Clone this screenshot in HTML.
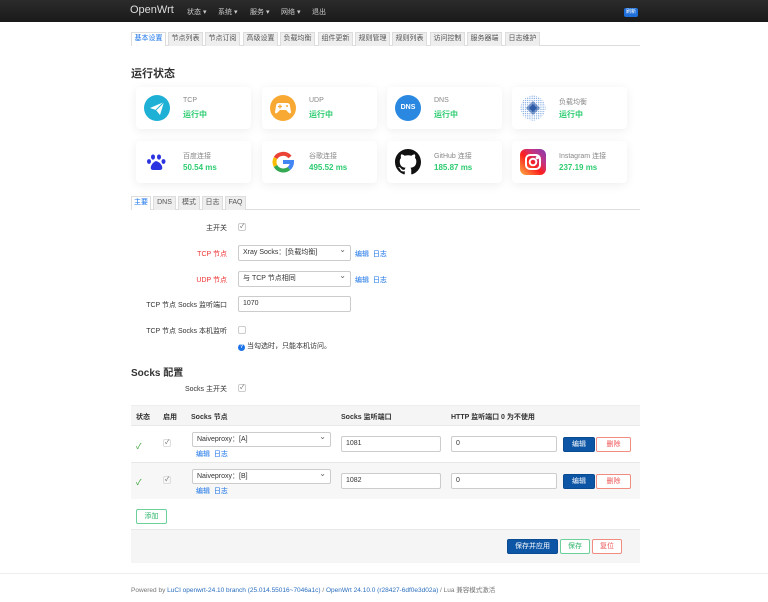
<!DOCTYPE html>
<html><head><meta charset="utf-8"><style>
*{box-sizing:border-box;margin:0;padding:0}
body{width:768px;height:602px;background:#fff;font-family:"Liberation Sans","Noto Sans CJK SC",sans-serif;font-size:7px;color:#333;position:relative;overflow:hidden}
.a{position:absolute;white-space:nowrap}
.hdr{left:0;top:0;width:768px;height:22px;background:linear-gradient(#2b2b2b,#1a1a1a)}
.tab{position:absolute;top:32px;height:14px;border:1px solid #ddd;border-bottom:none;background:#eee;font-size:7px;line-height:12px;text-align:center;color:#555}
.card{position:absolute;width:115px;height:42px;background:#fff;border-radius:4px;box-shadow:0 2px 10px rgba(0,0,0,.07)}
.card .ic{position:absolute;left:8px;top:8px;width:26px;height:26px;border-radius:50%}
.card .l{position:absolute;left:47px;top:10px;color:#888;font-size:7px}
.card .v{position:absolute;left:47px;top:22px;color:#2ecc71;font-weight:bold;font-size:8px}
.lab{position:absolute;right:541px;font-size:7px;color:#333}
.red{color:#e33}
.cb{position:absolute;width:8px;height:8px;border:1px solid #ccc;border-radius:2px;font-size:6px;line-height:6px;text-align:center;color:#555}
.sel,.inp{position:absolute;height:16px;border:1px solid #ccc;border-radius:2px;background:#fff;font-size:7px;line-height:14px;padding-left:4px;color:#333}
.sel:after{content:"⌄";position:absolute;right:4px;top:-3px;color:#666;font-size:8px}
.lk{color:#1a73e8;font-size:7px}
.btn{position:absolute;height:15px;border-radius:2px;font-size:7px;line-height:13px;text-align:center}
.bb{background:#0d56a6;border:1px solid #0a4a90;color:#fff}
.br{border:1px solid #f08c80;color:#e55;background:#fff}
.bg{border:1px solid #6cd09a;color:#2bb56a;background:#fff}
</style></head><body>
<div class="a hdr"></div>
<div class="a" style="left:130px;top:4px;color:#ddd;font-size:11px">OpenWrt</div>
<div class="a" style="left:187px;top:7px;color:#ccc;font-size:7px">状态 ▾</div>
<div class="a" style="left:218px;top:7px;color:#ccc;font-size:7px">系统 ▾</div>
<div class="a" style="left:250px;top:7px;color:#ccc;font-size:7px">服务 ▾</div>
<div class="a" style="left:281px;top:7px;color:#ccc;font-size:7px">网络 ▾</div>
<div class="a" style="left:312px;top:7px;color:#ccc;font-size:7px">退出</div>
<div class="a" style="left:624px;top:8px;width:14px;height:9px;background:#1e6fd9;border-radius:2px;color:#fff;font-size:5px;line-height:9px;text-align:center">刷新</div>

<div class="a" style="left:131px;top:45px;width:509px;height:1px;background:#ddd"></div>
<div class="tab" style="left:131px;width:35px;background:#fff;color:#1a73e8;height:14px">基本设置</div>
<div class="tab" style="left:168px;width:35px">节点列表</div>
<div class="tab" style="left:205px;width:35px">节点订阅</div>
<div class="tab" style="left:243px;width:35px">高级设置</div>
<div class="tab" style="left:280px;width:35px">负载均衡</div>
<div class="tab" style="left:318px;width:35px">组件更新</div>
<div class="tab" style="left:355px;width:35px">规则管理</div>
<div class="tab" style="left:392px;width:35px">规则列表</div>
<div class="tab" style="left:430px;width:35px">访问控制</div>
<div class="tab" style="left:467px;width:35px">服务器端</div>
<div class="tab" style="left:505px;width:35px">日志维护</div>

<div class="a" style="left:131px;top:65px;font-size:11px;font-weight:bold;color:#333">运行状态</div>

<div class="card" style="left:136px;top:87px"><div class="ic" style="background:#1fb0d6"><svg width="26" height="26" viewBox="0 0 26 26"><path d="M6 13 L20 7 L16 20 L12 15 Z" fill="#fff"/><path d="M12 15 L20 7" stroke="#1fb0d6" stroke-width="1"/></svg></div><div class="l">TCP</div><div class="v">运行中</div></div>
<div class="card" style="left:262px;top:87px"><div class="ic" style="background:#f8a933"><svg width="26" height="26" viewBox="0 0 26 26"><path d="M6 11 Q6 8 9 8 L17 8 Q20 8 20 11 L21 17 Q21 19 19 18 L16 15 L10 15 L7 18 Q5 19 5 17 Z" fill="#fff"/><circle cx="17" cy="11" r="1" fill="#f8a933"/><path d="M8 11.5h4M10 9.5v4" stroke="#f8a933" stroke-width="1.2"/></svg></div><div class="l">UDP</div><div class="v">运行中</div></div>
<div class="card" style="left:387px;top:87px"><div class="ic" style="background:#2a88e0;color:#fff;font-size:7px;line-height:26px;text-align:center;font-weight:bold">DNS</div><div class="l">DNS</div><div class="v">运行中</div></div>
<div class="card" style="left:512px;top:87px"><div class="ic"><svg width="26" height="26" viewBox="0 0 26 26"><defs><pattern id="d" width="2.2" height="2.2" patternUnits="userSpaceOnUse"><circle cx="1.1" cy="1.1" r=".55" fill="#4a86d8"/></pattern></defs><circle cx="13" cy="13" r="12.5" fill="url(#d)"/><path d="M13 6 L20 13 L13 20 L6 13Z" fill="#1d4fa0" opacity=".55"/><path d="M13 9 L17 13 L13 17 L9 13Z" fill="#1d4fa0" opacity=".8"/></svg></div><div class="l">负载均衡</div><div class="v">运行中</div></div>

<div class="card" style="left:136px;top:141px"><div class="ic"><svg width="26" height="26" viewBox="0 0 26 26" fill="#2b34e0"><ellipse cx="9" cy="8" rx="2" ry="2.6"/><ellipse cx="15" cy="8" rx="2" ry="2.6"/><ellipse cx="5" cy="12.5" rx="2" ry="2.4"/><ellipse cx="19.5" cy="12.5" rx="2" ry="2.4"/><path d="M12 12 Q9 13 7 17 Q6 21 9 21 L16 21 Q19 21 18 17 Q16 13 12 12Z"/></svg></div><div class="l">百度连接</div><div class="v">50.54 ms</div></div>
<div class="card" style="left:262px;top:141px"><div class="ic"><svg width="26" height="26" viewBox="0 0 26 26" fill="none" stroke-width="4"><path d="M20 8 A9 9 0 0 0 5.5 9" stroke="#ea4335"/><path d="M5.5 9 A9 9 0 0 0 5.5 17" stroke="#fbbc05"/><path d="M5.5 17 A9 9 0 0 0 19 19.5" stroke="#34a853"/><path d="M19 19.5 A9 9 0 0 0 22 13 L13 13" stroke="#4285f4"/></svg></div><div class="l">谷歌连接</div><div class="v">495.52 ms</div></div>
<div class="card" style="left:387px;top:141px"><div class="ic"><svg width="26" height="26" viewBox="0 0 16 16"><path fill="#111" d="M8 0C3.58 0 0 3.58 0 8c0 3.540 2.29 6.53 5.47 7.59.4.07.55-.17.55-.38 0-.19-.01-.82-.01-1.49-2.01.37-2.530-.49-2.69-.94-.09-.23-.48-.94-.82-1.130-.28-.15-.68-.52-.01-.53.63-.01 1.08.58 1.23.82.72 1.21 1.87.87 2.33.66.07-.52.28-.87.51-1.07-1.78-.2-3.64-.89-3.64-3.95 0-.87.31-1.59.82-2.15-.08-.2-.36-1.02.08-2.12 0 0 .67-.21 2.2.82.64-.18 1.32-.27 2-.27.68 0 1.36.09 2 .27 1.53-1.04 2.2-.82 2.2-.82.44 1.1.16 1.92.08 2.12.51.56.82 1.27.82 2.15 0 3.07-1.87 3.75-3.65 3.95.29.25.54.73.54 1.48 0 1.07-.01 1.93-.01 2.2 0 .21.15.46.55.38A8.013 8.013 0 0016 8c0-4.42-3.58-8-8-8z"/></svg></div><div class="l">GitHub 连接</div><div class="v">185.87 ms</div></div>
<div class="card" style="left:512px;top:141px"><div class="ic" style="border-radius:6px;background:linear-gradient(45deg,#fcb045,#fd1d1d 45%,#c13584 70%,#833ab4)"><svg width="26" height="26" viewBox="0 0 26 26" fill="none" stroke="#fff" stroke-width="2"><rect x="6" y="6" width="14" height="14" rx="4"/><circle cx="13" cy="13" r="3.3"/><circle cx="17.3" cy="8.7" r=".6" fill="#fff"/></svg></div><div class="l">Instagram 连接</div><div class="v">237.19 ms</div></div>

<div class="a" style="left:131px;top:209px;width:509px;height:1px;background:#ddd"></div>
<div class="tab" style="top:196px;left:131px;width:20px;height:14px;background:#fff;color:#1a73e8">主要</div>
<div class="tab" style="top:196px;left:153px;width:23px">DNS</div>
<div class="tab" style="top:196px;left:178px;width:22px">模式</div>
<div class="tab" style="top:196px;left:202px;width:21px">日志</div>
<div class="tab" style="top:196px;left:225px;width:21px">FAQ</div>

<div class="lab" style="top:223px">主开关</div><div class="cb" style="left:238px;top:223px">✓</div>
<div class="lab red" style="top:249px">TCP 节点</div>
<div class="sel" style="left:238px;top:245px;width:113px">Xray Socks：[负载均衡]</div>
<div class="a lk" style="left:355px;top:249px">编辑 &nbsp;日志</div>
<div class="lab red" style="top:275px">UDP 节点</div>
<div class="sel" style="left:238px;top:271px;width:113px">与 TCP 节点相同</div>
<div class="a lk" style="left:355px;top:275px">编辑 &nbsp;日志</div>
<div class="lab" style="top:300px">TCP 节点 Socks 监听端口</div>
<div class="inp" style="left:238px;top:296px;width:113px">1070</div>
<div class="lab" style="top:326px">TCP 节点 Socks 本机监听</div><div class="cb" style="left:238px;top:326px"></div>
<div class="a" style="left:238px;top:341px;font-size:7px;color:#333"><span style="display:inline-block;width:7px;height:7px;border-radius:50%;background:#1a73e8;color:#fff;font-size:5px;line-height:7px;text-align:center;font-weight:bold">?</span> 当勾选时，只能本机访问。</div>

<div class="a" style="left:131px;top:364px;font-size:10px;font-weight:bold">Socks 配置</div>
<div class="lab" style="top:384px">Socks 主开关</div><div class="cb" style="left:238px;top:384px">✓</div>

<div class="a" style="left:131px;top:405px;width:509px;height:20px;background:#f5f5f5;border-top:1px solid #eee"></div>
<div class="a" style="left:131px;top:462px;width:509px;height:37px;background:#f7f7f7;border-top:1px solid #e8e8e8"></div>
<div class="a" style="left:131px;top:425px;width:509px;height:1px;background:#e8e8e8"></div>
<div class="a" style="left:136px;top:412px;font-weight:bold">状态</div>
<div class="a" style="left:163px;top:412px;font-weight:bold">启用</div>
<div class="a" style="left:191px;top:412px;font-weight:bold">Socks 节点</div>
<div class="a" style="left:341px;top:412px;font-weight:bold">Socks 监听端口</div>
<div class="a" style="left:451px;top:412px;font-weight:bold">HTTP 监听端口 0 为不使用</div>

<div class="a" style="left:136px;top:441px;color:#2a9d2a;font-size:8px">✓</div>
<div class="cb" style="left:163px;top:439px;border-color:#ddd">✓</div>
<div class="sel" style="left:192px;top:432px;width:139px;height:15px;line-height:13px">Naiveproxy：[A]</div>
<div class="a lk" style="left:196px;top:449px">编辑 &nbsp;日志</div>
<div class="inp" style="left:341px;top:436px;width:100px">1081</div>
<div class="inp" style="left:451px;top:436px;width:106px">0</div>
<div class="btn bb" style="left:563px;top:437px;width:32px">编辑</div>
<div class="btn br" style="left:596px;top:437px;width:35px">删除</div>

<div class="a" style="left:136px;top:477px;color:#2a9d2a;font-size:8px">✓</div>
<div class="cb" style="left:163px;top:476px;border-color:#ddd">✓</div>
<div class="sel" style="left:192px;top:469px;width:139px;height:15px;line-height:13px">Naiveproxy：[B]</div>
<div class="a lk" style="left:196px;top:486px">编辑 &nbsp;日志</div>
<div class="inp" style="left:341px;top:473px;width:100px">1082</div>
<div class="inp" style="left:451px;top:473px;width:106px">0</div>
<div class="btn bb" style="left:563px;top:474px;width:32px">编辑</div>
<div class="btn br" style="left:596px;top:474px;width:35px">删除</div>

<div class="btn bg" style="left:136px;top:509px;width:31px">添加</div>

<div class="a" style="left:131px;top:529px;width:509px;height:34px;background:#f5f5f5;border-top:1px solid #e8e8e8"></div>
<div class="btn bb" style="left:507px;top:539px;width:51px">保存并应用</div>
<div class="btn bg" style="left:560px;top:539px;width:30px">保存</div>
<div class="btn br" style="left:592px;top:539px;width:30px">复位</div>

<div class="a" style="left:0;top:573px;width:768px;height:1px;background:#eee"></div>
<div class="a" style="left:131px;top:584px;font-size:6.5px;color:#777">Powered by <span style="color:#2a6ebd">LuCI openwrt-24.10 branch (25.014.55016~7046a1c)</span> / <span style="color:#2a6ebd">OpenWrt 24.10.0 (r28427-6df0e3d02a)</span> / Lua 兼容模式激活</div>
</body></html>
